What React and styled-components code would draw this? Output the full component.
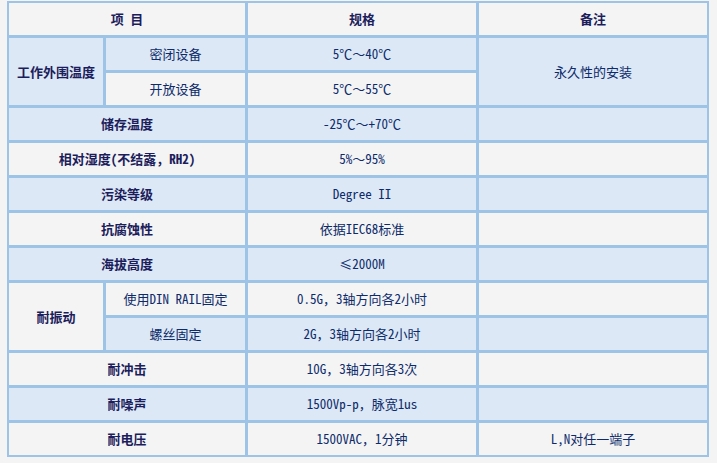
import React from "react";
import styled, { createGlobalStyle } from "styled-components";

const Global = createGlobalStyle`
  html, body { margin: 0; padding: 0; background: #f4f4f4; }
  body { font-family: "Noto Sans Mono CJK SC", "Noto Sans CJK SC", "Liberation Mono", monospace; }
`;

const Page = styled.div`
  padding: 1px 0 0 7px;
  background: #f4f4f4;
  min-height: 462px;
`;

const Table = styled.table`
  width: 702px;
  table-layout: fixed;
  border-collapse: separate;
  border-spacing: 1px;
  background: #9dc3e6;
  font-size: 13px;
  color: #0d2b6b;
`;

const Cell = styled.td`
  box-sizing: border-box;
  height: 34px;
  padding: 0;
  border: 1px solid #9dc3e6;
  background: ${(p) => (p.$shade ? "#dce8f5" : "#f4f4f4")};
  text-align: center;
  vertical-align: middle;
  font-weight: ${(p) => (p.$bold ? 700 : 400)};
  color: ${(p) => (p.$bold ? "#1c1d5c" : "#0d2b6b")};
  white-space: nowrap;
  line-height: 16px;
`;

const HeadCell = styled(Cell).attrs({ as: "th" })`
  font-weight: 700;
  color: #1c1d5c;
`;

const rows = [
  { label: "储存温度", spec: "-25℃～+70℃", note: "", shade: true },
  { label: "相对湿度(不结露，RH2)", spec: "5%～95%", note: "", shade: false },
  { label: "污染等级", spec: "Degree II", note: "", shade: true },
  { label: "抗腐蚀性", spec: "依据IEC68标准", note: "", shade: false },
  { label: "海拔高度", spec: "≤2000M", note: "", shade: true },
];

const tail = [
  { label: "耐冲击", spec: "10G，3轴方向各3次", note: "", shade: false },
  { label: "耐噪声", spec: "1500Vp-p，脉宽1us", note: "", shade: true },
  { label: "耐电压", spec: "1500VAC，1分钟", note: "L,N对任一端子", shade: false },
];

function SimpleRow({ r }) {
  return (
    <tr>
      <Cell colSpan={2} $shade={r.shade} $bold>{r.label}</Cell>
      <Cell $shade={r.shade}>{r.spec}</Cell>
      <Cell $shade={r.shade}>{r.note}</Cell>
    </tr>
  );
}

export default function App() {
  return (
    <>
      <Global />
      <Page>
        <Table>
          <colgroup>
            <col style={{ width: 96 }} />
            <col style={{ width: 141 }} />
            <col style={{ width: 230 }} />
            <col style={{ width: 230 }} />
          </colgroup>
          <tbody>
            <tr>
              <HeadCell colSpan={2}>项 目</HeadCell>
              <HeadCell>规格</HeadCell>
              <HeadCell>备注</HeadCell>
            </tr>
            <tr>
              <Cell rowSpan={2} $shade $bold>工作外围温度</Cell>
              <Cell $shade>密闭设备</Cell>
              <Cell $shade>5℃～40℃</Cell>
              <Cell rowSpan={2} $shade>永久性的安装</Cell>
            </tr>
            <tr>
              <Cell>开放设备</Cell>
              <Cell>5℃～55℃</Cell>
            </tr>
            {rows.map((r) => (
              <SimpleRow key={r.label} r={r} />
            ))}
            <tr>
              <Cell rowSpan={2} $bold>耐振动</Cell>
              <Cell>使用DIN RAIL固定</Cell>
              <Cell>0.5G，3轴方向各2小时</Cell>
              <Cell></Cell>
            </tr>
            <tr>
              <Cell $shade>螺丝固定</Cell>
              <Cell $shade>2G，3轴方向各2小时</Cell>
              <Cell $shade></Cell>
            </tr>
            {tail.map((r) => (
              <SimpleRow key={r.label} r={r} />
            ))}
          </tbody>
        </Table>
      </Page>
    </>
  );
}
